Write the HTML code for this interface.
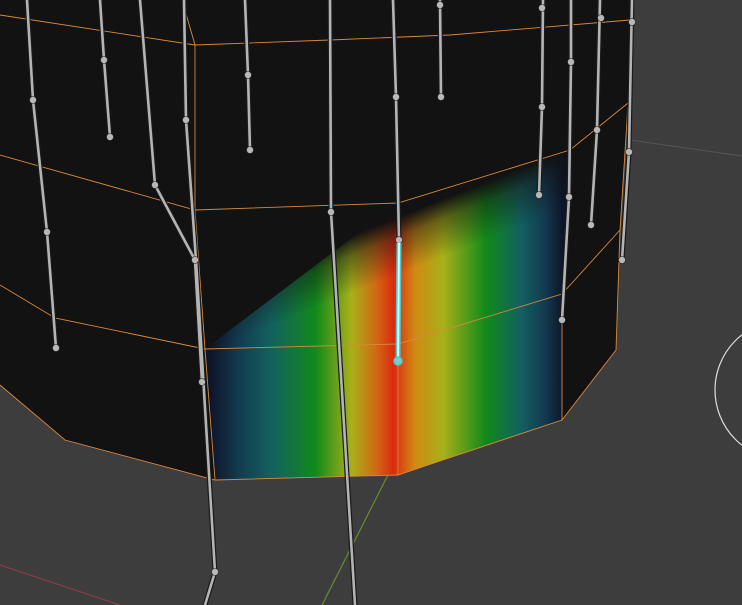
<!DOCTYPE html>
<html><head><style>html,body{margin:0;padding:0;background:#3d3d3d;overflow:hidden}svg{display:block}</style></head>
<body>
<svg width="742" height="605" viewBox="0 0 742 605" xmlns="http://www.w3.org/2000/svg">
<defs>
<linearGradient id="w" x1="210" y1="0" x2="563" y2="0" gradientUnits="userSpaceOnUse">
<stop offset="0" stop-color="#0f1428"/>
<stop offset="0.08" stop-color="#123a50"/>
<stop offset="0.17" stop-color="#136060"/>
<stop offset="0.3" stop-color="#118a1a"/>
<stop offset="0.4" stop-color="#a8b018"/>
<stop offset="0.47" stop-color="#d06a14"/>
<stop offset="0.52" stop-color="#dc2a10"/>
<stop offset="0.58" stop-color="#d08a14"/>
<stop offset="0.66" stop-color="#a8b018"/>
<stop offset="0.78" stop-color="#118a1a"/>
<stop offset="0.88" stop-color="#136060"/>
<stop offset="0.95" stop-color="#123a50"/>
<stop offset="1" stop-color="#0f1428"/>
</linearGradient>
<linearGradient id="m" x1="385" y1="222" x2="405" y2="272" gradientUnits="userSpaceOnUse">
<stop offset="0" stop-color="#000"/>
<stop offset="0.35" stop-color="#888"/>
<stop offset="1" stop-color="#fff"/>
</linearGradient>
<mask id="mk"><rect x="0" y="0" width="742" height="605" fill="url(#m)"/></mask>
</defs>
<rect width="742" height="605" fill="#3d3d3d"/>
<line x1="630" y1="140" x2="742" y2="156" stroke="#555" stroke-width="1"/>
<circle cx="785" cy="390" r="70" fill="none" stroke="#ddd" stroke-width="1.2"/>
<line x1="0" y1="565" x2="120" y2="605" stroke="#8a3a48" stroke-width="1.2"/>
<line x1="388" y1="475" x2="322" y2="605" stroke="#6a8a30" stroke-width="1.2"/>
<polygon points="0,0 634,0 628,105 620,230 616,350 562,420 398,475 215,480 65,440 0,385" fill="#121212"/>
<polygon points="205,349 398,344 562,294 562,420 398,475 215,480" fill="url(#w)"/>
<polygon points="205,349 398,203 570,150 562,294 398,344" fill="url(#w)" mask="url(#mk)"/>
<g fill="none" stroke="#d98a3a" stroke-width="0.9">
<polyline points="0,15 195,45 330,40 450,35 630,20"/>
<polyline points="0,155 195,210 398,203 570,150 628,103"/>
<polyline points="0,285 55,318 205,349 398,344 562,294 620,230"/>
<polyline points="0,385 65,440 215,480 398,475 562,420 616,350"/>
<polyline points="182,0 195,45 195,210 205,349 215,480"/>
<polyline points="562,294 562,420"/>
<line x1="398" y1="344" x2="398" y2="475" stroke="#e6a070" stroke-width="0.6"/>
<polyline points="634,0 628,105 620,230 616,350"/>
</g>
<g fill="none" stroke="#1a1a1a" stroke-width="5" stroke-linecap="round">
<polyline points="27,0 33,100 47,232 56,348"/>
<polyline points="100,0 104,60 110,137"/>
<polyline points="140,0 155,185 195,260 202,382"/>
<polyline points="184,0 186,120 196,260 215,572 205,605"/>
<polyline points="245,0 248,75 250,150"/>
<polyline points="330,0 331,212 355,605"/>
<polyline points="393,0 396,97 399,240"/>
<polyline points="440,0 441,97"/>
<polyline points="543,0 542,107 539,195"/>
<polyline points="571,0 571,62 569,197 562,320"/>
<polyline points="600,0 597,130 591,225"/>
<polyline points="632,0 629,152 622,260"/>
</g>
<g fill="none" stroke="#b4b4b4" stroke-width="2.6" stroke-linecap="round">
<polyline points="27,0 33,100 47,232 56,348"/>
<polyline points="100,0 104,60 110,137"/>
<polyline points="140,0 155,185 195,260 202,382"/>
<polyline points="184,0 186,120 196,260 215,572 205,605"/>
<polyline points="245,0 248,75 250,150"/>
<polyline points="330,0 331,212 355,605"/>
<polyline points="393,0 396,97 399,240"/>
<polyline points="440,0 441,97"/>
<polyline points="543,0 542,107 539,195"/>
<polyline points="571,0 571,62 569,197 562,320"/>
<polyline points="600,0 597,130 591,225"/>
<polyline points="632,0 629,152 622,260"/>
</g>
<g fill="#b8b8b8" stroke="#222" stroke-width="0.6">
<circle cx="33" cy="100" r="3.5"/><circle cx="47" cy="232" r="3.5"/><circle cx="56" cy="348" r="3.5"/>
<circle cx="104" cy="60" r="3.5"/><circle cx="110" cy="137" r="3.5"/>
<circle cx="155" cy="185" r="3.5"/><circle cx="195" cy="260" r="3.5"/><circle cx="202" cy="382" r="3.5"/>
<circle cx="186" cy="120" r="3.5"/><circle cx="215" cy="572" r="3.5"/>
<circle cx="248" cy="75" r="3.5"/><circle cx="250" cy="150" r="3.5"/>
<circle cx="331" cy="212" r="3.5"/>
<circle cx="396" cy="97" r="3.5"/><circle cx="399" cy="240" r="3.5"/>
<circle cx="441" cy="97" r="3.5"/><circle cx="440" cy="5" r="3.5"/>
<circle cx="542" cy="107" r="3.5"/><circle cx="539" cy="195" r="3.5"/><circle cx="542" cy="8" r="3.5"/>
<circle cx="571" cy="62" r="3.5"/><circle cx="569" cy="197" r="3.5"/><circle cx="562" cy="320" r="3.5"/>
<circle cx="597" cy="130" r="3.5"/><circle cx="591" cy="225" r="3.5"/><circle cx="601" cy="18" r="3.5"/>
<circle cx="629" cy="152" r="3.5"/><circle cx="622" cy="260" r="3.5"/><circle cx="632" cy="22" r="3.5"/>
</g>
<line x1="399" y1="243" x2="398" y2="360" stroke="#4fc8cc" stroke-width="5"/>
<line x1="399" y1="243" x2="398" y2="360" stroke="#c8ffff" stroke-width="2"/>
<circle cx="398" cy="361" r="4" fill="#7acccc" stroke="#4fc8cc" stroke-width="1.5"/>
</svg>
</body></html>
